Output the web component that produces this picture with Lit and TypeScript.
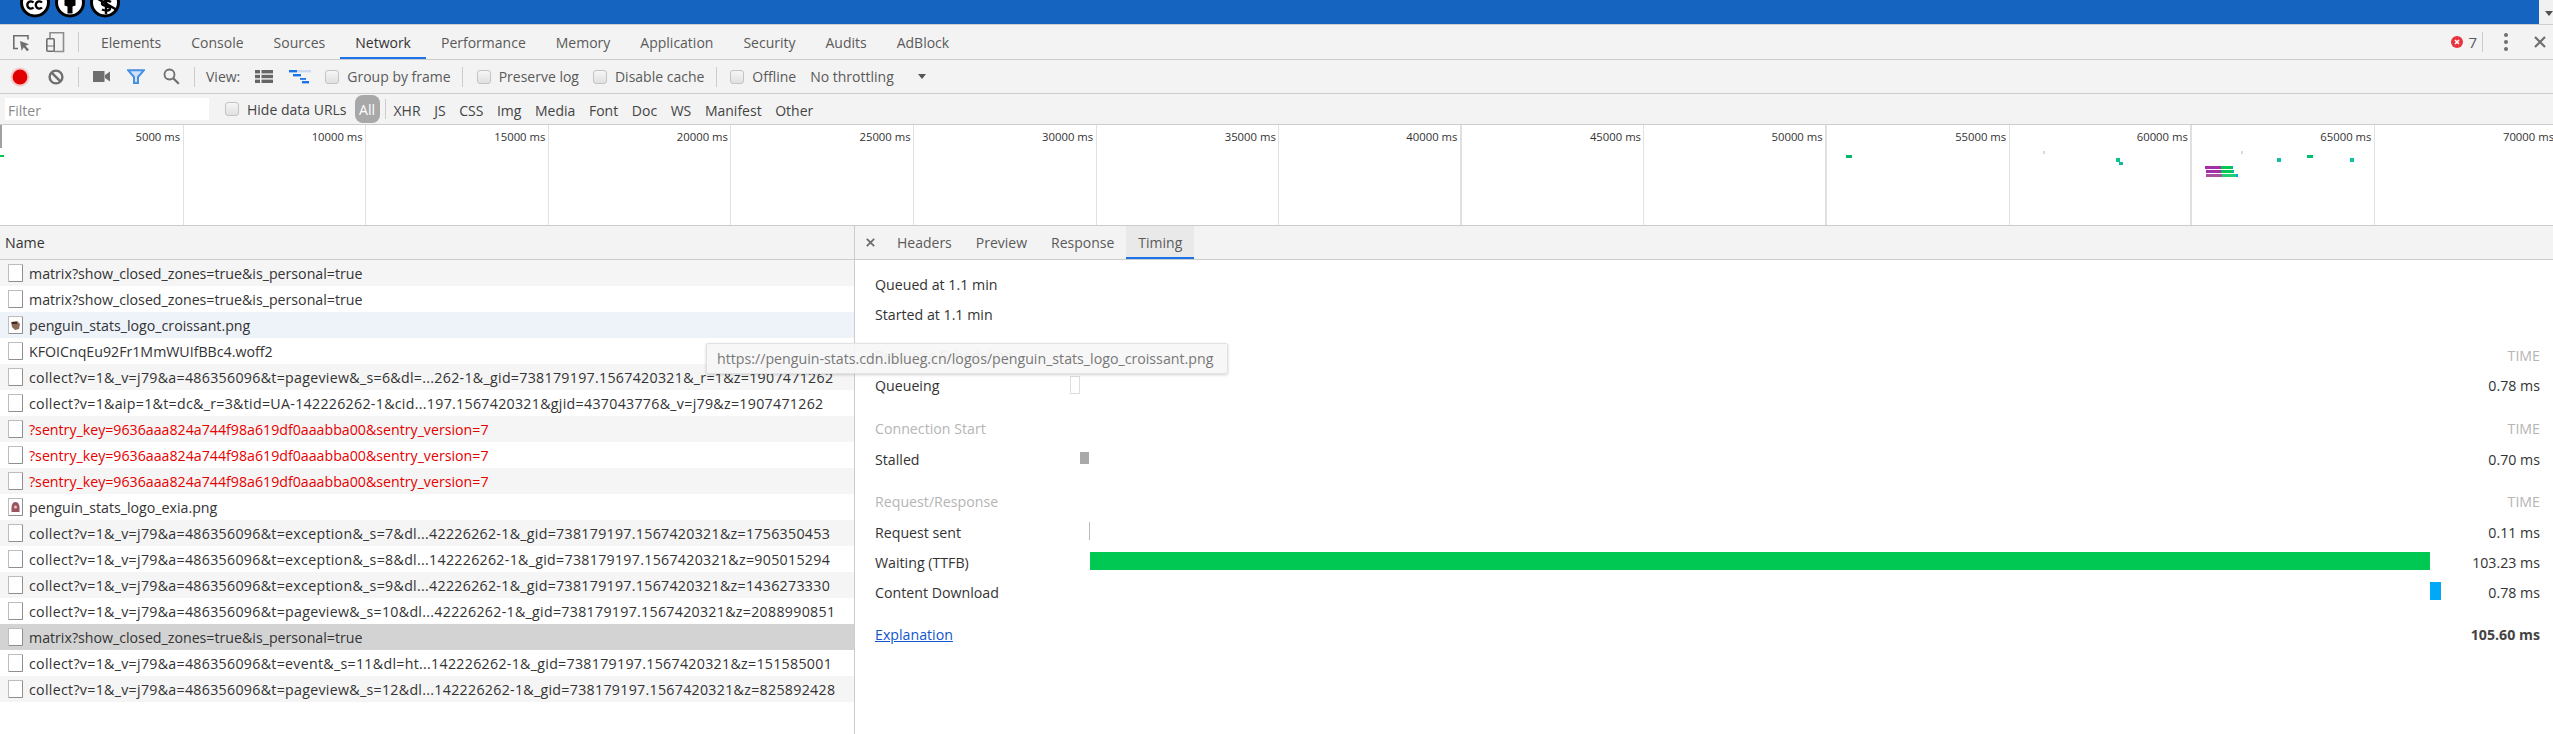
import { LitElement, html, css, svg, unsafeCSS } from 'lit';
import { customElement } from 'lit/decorators.js';

const FONT = unsafeCSS(`"Open Sans", "Liberation Sans", sans-serif`);

const MATRIX = 'matrix?show_closed_zones=true&is_personal=true';
const SENTRY = '?sentry_key=9636aaa824a744f98a619df0aaabba00&sentry_version=7';

// name, kind of row
const ROWS: { name: string; cls?: string; icon?: string }[] = [
  { name: MATRIX },
  { name: MATRIX },
  { name: 'penguin_stats_logo_croissant.png', cls: 'hover', icon: 'croissant' },
  { name: 'KFOICnqEu92Fr1MmWUIfBBc4.woff2' },
  { name: 'collect?v=1&_v=j79&a=486356096&t=pageview&_s=6&dl=...262-1&_gid=738179197.1567420321&_r=1&z=1907471262', cls: 'query' },
  { name: 'collect?v=1&aip=1&t=dc&_r=3&tid=UA-142226262-1&cid...197.1567420321&gjid=437043776&_v=j79&z=1907471262', cls: 'query' },
  { name: SENTRY, cls: 'err' },
  { name: SENTRY, cls: 'err' },
  { name: SENTRY, cls: 'err' },
  { name: 'penguin_stats_logo_exia.png', icon: 'exia' },
  { name: 'collect?v=1&_v=j79&a=486356096&t=exception&_s=7&dl...42226262-1&_gid=738179197.1567420321&z=1756350453', cls: 'query' },
  { name: 'collect?v=1&_v=j79&a=486356096&t=exception&_s=8&dl...142226262-1&_gid=738179197.1567420321&z=905015294', cls: 'query' },
  { name: 'collect?v=1&_v=j79&a=486356096&t=exception&_s=9&dl...42226262-1&_gid=738179197.1567420321&z=1436273330', cls: 'query' },
  { name: 'collect?v=1&_v=j79&a=486356096&t=pageview&_s=10&dl...42226262-1&_gid=738179197.1567420321&z=2088990851', cls: 'query' },
  { name: MATRIX, cls: 'selected' },
  { name: 'collect?v=1&_v=j79&a=486356096&t=event&_s=11&dl=ht...142226262-1&_gid=738179197.1567420321&z=151585001', cls: 'query' },
  { name: 'collect?v=1&_v=j79&a=486356096&t=pageview&_s=12&dl...142226262-1&_gid=738179197.1567420321&z=825892428', cls: 'query' },
];

const TICKS = Array.from({ length: 14 }, (_, i) => (i + 1) * 5000);
const MAJOR_TICKS = [40000, 50000, 60000];

// x, y, w, h, colour of the marks in the network overview
const MARKS: [number, number, number, number, string][] = [
  [0, 125, 2, 23, '#a0a0a0'],
  [0, 155, 4, 2, '#00c853'],
  [1846, 155, 6, 3, '#00b86b'],
  [2043, 151, 2, 3, '#d8d8d8'],
  [2116, 158, 4, 4, '#10c090'],
  [2119, 162, 4, 3, '#10b8a0'],
  [2241, 151, 2, 3, '#d8d8d8'],
  [2277, 158, 4, 4, '#10c0a0'],
  [2307, 155, 6, 3, '#00c070'],
  [2350, 158, 4, 4, '#10c0a0'],
  [2205, 166, 16, 3, '#a32fa8'],
  [2221, 166, 11, 3, '#00c853'],
  [2232, 166, 1, 3, '#00a8e0'],
  [2206, 170, 15, 3, '#a32fa8'],
  [2221, 170, 12, 3, '#00c853'],
  [2233, 170, 1, 3, '#00a8e0'],
  [2206, 174, 16, 3, '#a84fa0'],
  [2222, 174, 14, 3, '#20d070'],
  [2236, 174, 2, 3, '#00a8e0'],
];

@customElement('app-root')
export class AppRoot extends LitElement {
  static styles = css`
    :host {
      display: block;
      width: 2553px;
      height: 734px;
      overflow: hidden;
      position: relative;
      background: #fff;
      font-family: ${FONT};
      font-size: 14.2px;
      color: #333;
    }
    .page-top {
      height: 24px;
      display: flex;
      background: #f1f1f1;
      overflow: hidden;
    }
    .banner {
      width: 2539px;
      background: #1565c0;
      overflow: hidden;
    }
    .banner svg { display: block; }
    .scroll-arrow {
      flex: 1;
      display: flex;
      justify-content: flex-end;
      padding: 11px 0 0;
    }
    .arrow-down {
      width: 0;
      height: 0;
      border-left: 4px solid transparent;
      border-right: 4px solid transparent;
      border-top: 5px solid #505050;
    }

    .bar {
      display: flex;
      align-items: center;
      background: #f3f3f3;
      color: #5a5a5a;
      white-space: nowrap;
      font-size: 14px;
    }
    .tabs { height: 34px; border-top: 1px solid #cfcfcf; border-bottom: 1px solid #ccc; }
    .toolbar { height: 33px; border-bottom: 1px solid #ccc; }
    .filters { height: 30px; border-bottom: 1px solid #ccc; color: #444; }

    .tool-icons { display: flex; padding-left: 8px; width: 70px; box-sizing: border-box; margin-right: 8px; }
    .vsep { width: 1px; height: 20px; background: #ccc; flex: none; }
    .tab {
      height: 100%;
      box-sizing: border-box;
      padding: 0 15px;
      display: flex;
      align-items: center;
      color: #5a5a5a;
    }
    .tab.active {
      color: #333;
      border-bottom: 2px solid #1a73e8;
      padding-top: 2px;
    }
    .tab-strip { display: flex; height: 100%; padding-left: 7px; flex: 1; }
    .errors { display: flex; align-items: center; }
    .error-count { margin: 0 5px; font-size: 15px; color: #5a5a5a; }
    .menu-icons { display: flex; align-items: center; padding-right: 7px; }
    .menu-icons svg { display: block; }
    .dots { margin: 0 26px 0 21px; }

    .rec { padding-left: 10px; }
    .rec svg { display: block; }
    .stop { margin-left: 18px; }
    .sep-stop { margin: 0 14px; }
    .funnel { margin-left: 17px; }
    .search { margin-left: 18px; }
    .sep-search { margin-left: 14px; }
    .waterfall { margin-left: 16px; }
    .group { margin-left: 14px; }
    .sep-group { margin: 0 14px 0 11px; }
    .disable { margin-left: 14px; }
    .sep-disable { margin: 0 13px 0 12px; }
    .throttle { margin-left: 14px; }
    .throttle-arrow { margin-left: 24px; border-top-color: #555; }
    .check { display: flex; align-items: center; gap: 8px; }
    .box {
      width: 12px;
      height: 12px;
      border: 1px solid #c4c4c4;
      border-radius: 3px;
      background: linear-gradient(#f6f6f6, #e0e0e0);
      flex: none;
    }
    .view-label { margin: 0 15px 0 11px; }

    .filter-input {
      width: 204px;
      height: 22px;
      margin: 0 16px 0 5px;
      box-sizing: border-box;
      background: #fff;
      color: #8a8a8a;
      padding: 2px 0 0 3px;
      display: flex;
      align-items: center;
    }
    .pill {
      background: #a8a8a8;
      color: #fff;
      height: 28px;
      width: 25px;
      border-radius: 8px;
      display: flex;
      align-items: center;
      justify-content: center;
      margin: 0 5px 0 8px;
    }
    .types { display: flex; gap: 13.6px; margin-left: 8px; padding-top: 2px; }

    .overview {
      height: 100px;
      display: flex;
      padding-left: 1px;
      background: #fff;
      border-bottom: 1px solid #ccc;
      overflow: hidden;
    }
    .tick {
      width: 182.62px;
      flex: none;
      box-sizing: border-box;
      border-right: 1px solid #e2e2e2;
      text-align: right;
      padding: 4px 2.5px 0 0;
      font-size: 11.3px;
      color: #333;
      white-space: nowrap;
    }
    .tick.major { border-right: 2px solid #e0e0e0; }
    .mark { position: absolute; }

    .split { display: flex; height: 508px; }
    .list { width: 854px; flex: none; border-right: 1px solid #ccc; }
    .list-head {
      height: 34px;
      box-sizing: border-box;
      background: #f3f3f3;
      border-bottom: 1px solid #ccc;
      padding: 0 5px;
      display: flex;
      align-items: center;
      color: #333;
    }
    .row {
      height: 26px;
      display: flex;
      align-items: center;
      white-space: nowrap;
      padding-left: 8px;
      gap: 6px;
      background: #fff;
    }
    .row:nth-child(odd) { background: #f5f5f5; }
    .row.hover { background: #eef2f9; }
    .row.selected { background: #d3d3d3; }
    .row.err { color: #e60000; }
    .row.query { letter-spacing: 0.3px; }
    .file { flex: none; display: block; }

    .detail { flex: 1; min-width: 0; }
    .detail-tabs {
      height: 34px;
      box-sizing: border-box;
      background: #f3f3f3;
      border-bottom: 1px solid #ccc;
      display: flex;
      align-items: stretch;
      color: #5a5a5a;
      font-size: 14px;
    }
    .close { width: 30px; display: flex; align-items: center; padding-left: 11px; box-sizing: border-box; }
    .detail-tab { padding: 0 12px; display: flex; align-items: center; }
    .detail-tab.active {
      background: #e9e9e9;
      border-bottom: 2px solid #1a73e8;
      padding-top: 2px;
      box-sizing: border-box;
    }
    .timing { padding: 9px 13px 0 20px; }
    .started { height: 30px; display: flex; align-items: center; }
    .grid { display: grid; grid-template-columns: 195px 1fr 99px; margin-top: 11px; }
    .line { display: contents; }
    .line > * { height: 30px; display: flex; align-items: center; }
    .section { color: #b5b5b5; }
    .line > .section.after-row { margin-top: 12px; height: 32px; }
    .line > .section.after-row.tight { margin-top: 11px; }
    .time { justify-content: flex-end; }
    .track { position: relative; }
    .seg { position: absolute; }
    .seg.queueing { box-sizing: border-box; border: 1px solid #ddd; background: #fff; }
    .seg.stalled { background: #a9a9a9; }
    .seg.sent { background: #bbb; }
    .seg.waiting { background: #00c853; }
    .seg.download { background: #00a8f7; }
    .line > .foot { margin-top: 12px; }
    .total { font-weight: 700; color: #444; }
    a { color: #1155cc; text-decoration: underline; }

    .tooltip {
      position: absolute;
      left: 706px;
      top: 343px;
      width: 522px;
      height: 31px;
      box-sizing: border-box;
      padding: 0 10px;
      display: flex;
      align-items: center;
      white-space: nowrap;
      background: rgba(246, 246, 246, 0.88);
      border: 1px solid #e2e2e2;
      border-radius: 2px;
      box-shadow: 0 1px 3px rgba(0, 0, 0, 0.18);
      color: #777;
    }
  `;

  private ccLogos() {
    return html`<svg width="140" height="24" viewBox="0 0 140 24">
      <g fill="#fff" stroke="#000" stroke-width="3">
        <circle cx="35" cy="2.5" r="13.5" />
        <circle cx="70" cy="2.5" r="13.5" />
        <circle cx="105" cy="2.5" r="13.5" />
      </g>
      <g fill="none" stroke="#000" stroke-width="2.4">
        <path d="M33.5 2.5a3.6 3.6 0 1 0 0 5" />
        <path d="M42 2.5a3.6 3.6 0 1 0 0 5" />
      </g>
      <path d="M64.5 0h11v5.5l-3 1v7h-5v-7l-3-1z" fill="#000" />
      <path d="M111 2c-3-2-9-1-9 1.5 0 3 8 2 8 5 0 2.5-5 2.5-8 1M106 -2v16M93 -4l24 14" fill="none" stroke="#000" stroke-width="2.4" />
    </svg>`;
  }

  private fileIcon(kind?: string) {
    return html`<svg class="file" width="15" height="18" viewBox="0 0 15 18">
      <rect x="0.5" y="0.5" width="14" height="17" fill="#fff" stroke="#bdbdbd" />
      <path d="M1 17.5h13.5V1" fill="none" stroke="#8f8f8f" />
      ${kind === 'croissant'
        ? svg`<path d="M3 6l6-1 3 3-1 5-4 1-3-3z" fill="#8d6a55" /><path d="M4 6h5v2H4z" fill="#3a2a2a" />`
        : ''}
      ${kind === 'exia'
        ? svg`<path d="M7.5 4c3 0 4 3 4 6v4h-8v-4c0-3 1-6 4-6z" fill="#9a5560" /><circle cx="7.5" cy="9" r="1.5" fill="#e8c8c0" />`
        : ''}
    </svg>`;
  }

  private check(label: string) {
    return html`<label class="check"><span class="box"></span>${label}</label>`;
  }

  private timingLine(label: string, time: string, bar: unknown = '') {
    return html`<div class="line">
      <div>${label}</div>
      <div class="track">${bar}</div>
      <div class="time">${time}</div>
    </div>`;
  }

  private sectionLine(label: string, gap = '') {
    const cls = `section ${gap}`;
    return html`<div class="line">
      <div class=${cls}>${label}</div>
      <div class=${cls}></div>
      <div class="${cls} time">TIME</div>
    </div>`;
  }

  // bar position is relative to the timeline track, which starts at x = 1070
  private seg(kind: string, left: number, top: number, w: number, h: number) {
    return html`<span class="seg ${kind}" style="left:${left}px;top:${top}px;width:${w}px;height:${h}px"></span>`;
  }

  render() {
    return html`
      <div class="page-top">
        <div class="banner">${this.ccLogos()}</div>
        <div class="scroll-arrow"><span class="arrow-down"></span></div>
      </div>

      <div class="bar tabs">
        <div class="tool-icons">
          <svg width="60" height="22" viewBox="0 0 60 22" fill="none" stroke="#6e6e6e" stroke-width="1.6">
            <path d="M20 8.5V4.8H5.8V17.5H10" />
            <path d="M12 10l9 3.2-3.5 1.5 3.5 4-2 1.5-3.2-4-2.2 3.5z" fill="#6e6e6e" stroke="none" />
            <rect x="38.8" y="7.8" width="7.4" height="12.4" rx="1" />
            <path d="M39 15h7" stroke-width="1" />
            <path d="M42 7V1.8h13.5V20.5H46" stroke="#8c8c8c" />
          </svg>
        </div>
        <span class="vsep"></span>
        <div class="tab-strip">
          ${['Elements', 'Console', 'Sources', 'Network', 'Performance', 'Memory', 'Application', 'Security', 'Audits', 'AdBlock'].map(
            (t) => html`<div class="tab ${t === 'Network' ? 'active' : ''}">${t}</div>`,
          )}
        </div>
        <div class="errors">
          <svg width="12" height="12" viewBox="0 0 12 12">
            <circle cx="6" cy="6" r="6" fill="#e8343f" />
            <path d="M4 4l4 4M8 4l-4 4" stroke="#fff" stroke-width="1.6" />
          </svg>
          <span class="error-count">7</span>
          <span class="vsep"></span>
        </div>
        <div class="menu-icons">
          <svg class="dots" width="4" height="18" viewBox="0 0 4 18" fill="#6e6e6e">
            <circle cx="2" cy="2" r="2" /><circle cx="2" cy="9" r="2" /><circle cx="2" cy="16" r="2" />
          </svg>
          <svg width="12" height="12" viewBox="0 0 12 12">
            <path d="M1 1l10 10M11 1L1 11" stroke="#6e6e6e" stroke-width="2.2" />
          </svg>
        </div>
      </div>

      <div class="bar toolbar">
        <div class="rec">
          <svg width="20" height="20" viewBox="0 0 20 20">
            <circle cx="10" cy="10" r="9.5" fill="#f3c9c9" />
            <circle cx="10" cy="10" r="7.4" fill="#e00000" />
          </svg>
        </div>
        <svg class="stop" width="16" height="16" viewBox="0 0 16 16" fill="none" stroke="#6e6e6e" stroke-width="2.4">
          <circle cx="8" cy="8" r="6.4" /><path d="M3.6 3.6l8.8 8.8" />
        </svg>
        <span class="vsep sep-stop"></span>
        <svg width="17" height="11" viewBox="0 0 17 11" fill="#6e6e6e">
          <rect x="0" y="0" width="11.5" height="11" /><path d="M12 4l5-3.5v10L12 7z" />
        </svg>
        <svg class="funnel" width="18" height="15" viewBox="0 0 18 15">
          <path d="M1 1.2h16L11 8v6H7V8z" fill="#cfe2fa" stroke="#4a90e2" stroke-width="2" />
        </svg>
        <svg class="search" width="17" height="17" viewBox="0 0 17 17" fill="none" stroke="#6e6e6e" stroke-width="1.8">
          <circle cx="6.5" cy="6.5" r="5" /><path d="M10.2 10.2l5.6 5.6" stroke-width="2.2" />
        </svg>
        <span class="vsep sep-search"></span>
        <span class="view-label">View:</span>
        <svg width="18" height="13" viewBox="0 0 18 13" fill="#666">
          <rect width="5" height="3.4" /><rect x="6.5" width="11.5" height="3.4" />
          <rect y="4.8" width="5" height="3.4" /><rect x="6.5" y="4.8" width="11.5" height="3.4" />
          <rect y="9.6" width="5" height="3.4" /><rect x="6.5" y="9.6" width="11.5" height="3.4" />
        </svg>
        <svg class="waterfall" width="22" height="14" viewBox="0 0 22 14">
          <rect x="0" y="0" width="8" height="2.4" fill="#1a73e8" />
          <rect x="8" y="0" width="14" height="2.4" fill="#c9d9f0" />
          <rect x="4" y="4" width="8" height="2.4" fill="#1a73e8" />
          <rect x="11" y="8" width="6" height="1.8" fill="#1a73e8" />
          <rect x="13" y="11" width="7" height="2.4" fill="#1a73e8" />
        </svg>
        <span class="group">${this.check('Group by frame')}</span>
        <span class="vsep sep-group"></span>
        ${this.check('Preserve log')}
        <span class="disable">${this.check('Disable cache')}</span>
        <span class="vsep sep-disable"></span>
        ${this.check('Offline')}
        <span class="throttle">No throttling</span>
        <span class="arrow-down throttle-arrow"></span>
      </div>

      <div class="bar filters">
        <div class="filter-input">Filter</div>
        ${this.check('Hide data URLs')}
        <div class="pill">All</div>
        <span class="vsep"></span>
        <div class="types">
          ${['XHR', 'JS', 'CSS', 'Img', 'Media', 'Font', 'Doc', 'WS', 'Manifest', 'Other'].map((t) => html`<span>${t}</span>`)}
        </div>
      </div>

      <div class="overview">
        ${TICKS.map((t) => html`<div class="tick ${MAJOR_TICKS.includes(t) ? 'major' : ''}">${t} ms</div>`)}
      </div>
      ${MARKS.map(
        ([x, y, w, h, c]) =>
          html`<span class="mark" style="left:${x}px;top:${y}px;width:${w}px;height:${h}px;background:${c}"></span>`,
      )}

      <div class="split">
        <div class="list">
          <div class="list-head">Name</div>
          <div>
            ${ROWS.map(
              (r) => html`<div class="row ${r.cls ?? ''}">${this.fileIcon(r.icon)}<span>${r.name}</span></div>`,
            )}
          </div>
        </div>
        <div class="detail">
          <div class="detail-tabs">
            <div class="close">
              <svg width="9" height="9" viewBox="0 0 9 9"><path d="M.8.8l7.4 7.4M8.2.8L.8 8.2" stroke="#6e6e6e" stroke-width="1.8" /></svg>
            </div>
            ${['Headers', 'Preview', 'Response', 'Timing'].map(
              (t) => html`<div class="detail-tab ${t === 'Timing' ? 'active' : ''}">${t}</div>`,
            )}
          </div>
          <div class="timing">
            <div class="started">Queued at 1.1 min</div>
            <div class="started">Started at 1.1 min</div>
            <div class="grid">
              ${this.sectionLine('Resource Scheduling')}
              ${this.timingLine('Queueing', '0.78 ms', this.seg('queueing', 0, 6, 10, 18))}
              ${this.sectionLine('Connection Start', 'after-row')}
              ${this.timingLine('Stalled', '0.70 ms', this.seg('stalled', 10, 8, 9, 12))}
              ${this.sectionLine('Request/Response', 'after-row tight')}
              ${this.timingLine('Request sent', '0.11 ms', this.seg('sent', 19, 5, 1, 18))}
              ${this.timingLine('Waiting (TTFB)', '103.23 ms', this.seg('waiting', 20, 5, 1340, 18))}
              ${this.timingLine('Content Download', '0.78 ms', this.seg('download', 1360, 5, 11, 18))}
              <div class="line">
                <div class="foot"><a>Explanation</a></div>
                <div class="foot"></div>
                <div class="time total foot">105.60 ms</div>
              </div>
            </div>
          </div>
        </div>
      </div>

      <div class="tooltip">https://penguin-stats.cdn.iblueg.cn/logos/penguin_stats_logo_croissant.png</div>
    `;
  }
}
